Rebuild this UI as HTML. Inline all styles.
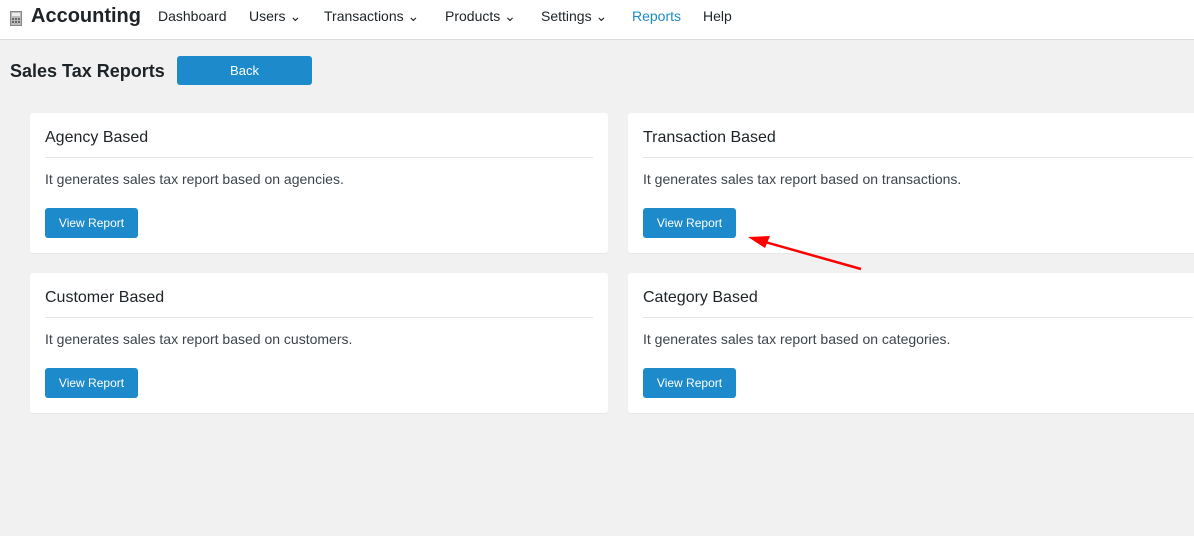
<!DOCTYPE html>
<html><head><style>
*{box-sizing:border-box;margin:0;padding:0}
body{width:1194px;height:536px;background:#f1f1f1;font-family:"Liberation Sans",sans-serif;position:relative;overflow:hidden;color:#1d2327}
.top{position:absolute;left:0;top:0;width:1194px;height:40px;background:#fff;border-bottom:1px solid #dcdcde}
.t{position:absolute;white-space:nowrap}
.nav{font-size:14px;top:8px;color:#1d2327}
.card{position:absolute;background:#fff;border-radius:3px;box-shadow:0 1px 1px rgba(0,0,0,.04)}
.card h3{position:absolute;left:15px;top:16px;font-size:16px;font-weight:normal}
.card hr{position:absolute;left:15px;right:15px;top:44px;border:0;border-top:1px solid #e2e4e7}
.card p{position:absolute;left:15px;top:58px;font-size:14px;color:#3c434a}
.btn{position:absolute;left:15px;top:95px;width:93px;height:30px;background:#1d8acb;border-radius:3px;color:#fff;font-size:12px;text-align:center;line-height:30px}
</style></head><body>
<div class="top"></div>
<svg class="t" style="left:10px;top:11px" width="12" height="15"><rect x="0.5" y="0.5" width="11" height="14" fill="#bbb" stroke="#888"/><rect x="2" y="2" width="8" height="3" fill="#eee"/><g fill="#666"><rect x="2" y="7" width="2" height="2"/><rect x="5" y="7" width="2" height="2"/><rect x="8" y="7" width="2" height="2"/><rect x="2" y="10" width="2" height="2"/><rect x="5" y="10" width="2" height="2"/><rect x="8" y="10" width="2" height="2"/></g></svg>
<div class="t" style="left:31px;top:5px;font-size:20px;font-weight:bold">Accounting</div>
<div class="t nav" style="left:158px">Dashboard</div>
<div class="t nav" style="left:249px">Users ⌄</div>
<div class="t nav" style="left:324px">Transactions ⌄</div>
<div class="t nav" style="left:445px">Products ⌄</div>
<div class="t nav" style="left:541px">Settings ⌄</div>
<div class="t nav" style="left:632px;color:#1d8acb">Reports</div>
<div class="t nav" style="left:703px">Help</div>
<div class="t" style="left:10px;top:61px;font-size:18px;font-weight:bold">Sales Tax Reports</div>
<div class="t" style="left:177px;top:56px;width:135px;height:29px;background:#1d8acb;border-radius:3px;color:#fff;font-size:13px;text-align:center;line-height:29px">Back</div>
<div class="card" style="left:30px;top:113px;width:578px;height:140px"><h3>Agency Based</h3><hr><p>It generates sales tax report based on agencies.</p><div class="btn">View Report</div></div>
<div class="card" style="left:628px;top:113px;width:580px;height:140px"><h3>Transaction Based</h3><hr><p>It generates sales tax report based on transactions.</p><div class="btn">View Report</div></div>
<div class="card" style="left:30px;top:273px;width:578px;height:140px"><h3>Customer Based</h3><hr><p>It generates sales tax report based on customers.</p><div class="btn">View Report</div></div>
<div class="card" style="left:628px;top:273px;width:580px;height:140px"><h3>Category Based</h3><hr><p>It generates sales tax report based on categories.</p><div class="btn">View Report</div></div>
<svg class="t" style="left:740px;top:228px" width="130" height="50"><line x1="121" y1="41" x2="18" y2="12" stroke="#f00" stroke-width="2.5"/><polygon points="8,9 30,8 25,20" fill="#f00"/></svg>
</body></html>
